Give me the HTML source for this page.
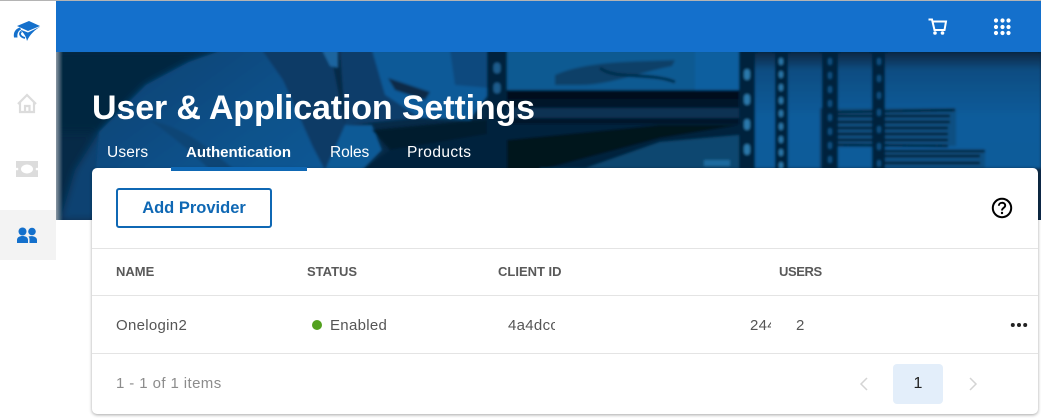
<!DOCTYPE html>
<html><head><meta charset="utf-8"><style>
*{box-sizing:border-box}
html,body{margin:0;padding:0;width:1041px;height:418px;overflow:hidden;background:#fff;font-family:"Liberation Sans",sans-serif}
.a{position:absolute;white-space:nowrap}
.th{font-size:13px;font-weight:bold;color:#595959;top:265px;line-height:14px}
.td{font-size:15px;color:#555;top:318px;line-height:16px;letter-spacing:.3px}
.tab{font-size:15.5px;color:#fff;top:144px;line-height:17px;letter-spacing:.15px}
</style></head><body>
<div class="a" style="left:0;top:0;width:1041px;height:1px;background:#b4b4b4"></div>
<div class="a" style="left:56px;top:1px;width:985px;height:51px;background:#1470cc"></div>
<svg class="a" style="left:0;top:0" width="1041" height="220" viewBox="0 0 1041 220">
<defs>
<filter id="b" x="-5%" y="-5%" width="110%" height="110%"><feGaussianBlur stdDeviation="1.2"/></filter>
<filter id="b2" x="-5%" y="-5%" width="110%" height="110%"><feGaussianBlur stdDeviation="4"/></filter>
<clipPath id="c"><rect x="56" y="52" width="985" height="168"/></clipPath>
<linearGradient id="w" x1="0" y1="0" x2="0" y2="1"><stop offset="0" stop-color="#06233c"/><stop offset=".12" stop-color="#0a4d82"/><stop offset=".4" stop-color="#0a5c9b"/><stop offset="1" stop-color="#0a5a98"/></linearGradient>
<linearGradient id="l" x1="0" y1="0" x2="1" y2="0"><stop offset="0" stop-color="#8a97a3"/><stop offset="1" stop-color="#8a97a3" stop-opacity="0"/></linearGradient>
<linearGradient id="s" x1="0" y1="0" x2="1" y2="1"><stop offset="0" stop-color="#0a3f6e"/><stop offset=".5" stop-color="#0c5088"/><stop offset="1" stop-color="#0d5a9a"/></linearGradient>
</defs>
<g clip-path="url(#c)">
<rect x="56" y="52" width="985" height="168" fill="#062a47"/>
<g filter="url(#b2)">
<rect x="56" y="52" width="180" height="80" fill="#06253f"/>
<path d="M60 220 L75 170 L99 132 L146 85 L189 62 L223 50 L300 50 L340 170 L340 220Z" fill="#0a4372"/>
</g>
<g filter="url(#b)">
<path d="M92 220 L99 132 L146 85 L189 62 L223 50 L262 50 L283 80 L313 147 L325 170 L92 170Z" fill="url(#s)"/>
<path d="M150 120 C190 130 210 150 235 170 L210 170 C190 150 170 135 150 120Z" fill="#0a4474"/>
<path d="M262 50 L330 50 L345 125 L325 170 L313 147 L283 80Z" fill="#0a3a66"/>
<path d="M322 50 L338 50 L338 68 L330 66Z" fill="#1a659f"/>
<path d="M370 50 L490 50 L490 92 L470 120 L420 118 L385 95Z" fill="#0c5a98"/>
<path d="M388 78 L430 92 L425 100 L395 90Z" fill="#072a47"/>
<path d="M450 50 L490 50 L490 88 L455 85Z" fill="#0a4a7e"/>
<path d="M325 170 L345 125 L372 125 L382 150 L362 170Z" fill="#0e5a96"/>
<path d="M340 50 L372 50 L385 95 L420 118 L345 125Z" fill="#0a3c6a"/>
<path d="M372 130 L500 118 L500 132 L390 150Z" fill="#051a2e"/>
<path d="M362 170 L390 150 L500 132 L500 170Z" fill="#06233c"/>
<rect x="505" y="50" width="190" height="40" fill="#0a5a92"/>
<path d="M555 75 C590 60 640 62 675 60 L672 66 C640 72 610 85 580 85 L555 85Z" fill="#083f68"/>
<path d="M600 68 C615 80 650 72 675 82" stroke="#062b4a" stroke-width="3" fill="none"/>
<rect x="695" y="50" width="46" height="42" fill="#0a5e9f"/>
<rect x="507" y="90" width="233" height="36" fill="#05192c"/>
<rect x="507" y="90" width="233" height="9" fill="#030f1c"/>
<rect x="507" y="108" width="233" height="10" fill="#0a3253"/>
<rect x="507" y="124" width="233" height="46" fill="#06233c"/>
<path d="M507 140 L660 125 L740 125 L660 138 L540 170 L507 170Z" fill="#04121f"/>
<path d="M580 170 L660 142 L740 135 L740 170Z" fill="#0a466f"/>
<rect x="704" y="160" width="26" height="6" fill="#1f6a9e"/>
<rect x="741" y="50" width="300" height="170" fill="url(#w)"/>
<rect x="540" y="168" width="501" height="52" fill="#0a3a60"/>
<rect x="1036" y="168" width="5" height="52" fill="#0b2b46"/>
<rect x="838" y="108" width="118" height="38" fill="#0a4f82"/>
<rect x="885" y="150" width="100" height="18" fill="#0a4f82"/>
<g stroke="#061a2c" stroke-width="2.4">
<line x1="838" y1="112" x2="955" y2="110"/><line x1="838" y1="116" x2="950" y2="116"/><line x1="838" y1="122" x2="950" y2="122"/><line x1="838" y1="128" x2="948" y2="128"/><line x1="838" y1="134" x2="948" y2="134"/><line x1="838" y1="140" x2="948" y2="140"/><line x1="838" y1="145" x2="948" y2="146"/>
<line x1="885" y1="151" x2="985" y2="151"/><line x1="885" y1="156" x2="980" y2="156"/><line x1="885" y1="163" x2="980" y2="163"/>
</g>
<rect x="820" y="108" width="18" height="60" fill="#0a3a60"/>
<g fill="#05233c">
<rect x="487" y="50" width="20" height="120"/>
<rect x="739" y="50" width="16" height="120"/>
<rect x="775" y="50" width="13" height="120"/>
<rect x="822" y="50" width="16" height="120"/>
<rect x="872" y="50" width="13" height="120"/>
</g>
<g stroke-linecap="round" fill="none" stroke="#0c4f82">
<line x1="497" y1="66" x2="497" y2="70" stroke-width="7" stroke="#1f5c8c"/>
<line x1="497" y1="86" x2="497" y2="90" stroke-width="7" stroke="#1f5c8c"/>
<line x1="747" y1="72" x2="747" y2="170" stroke-width="6" stroke-dasharray="5 20" stroke="#2a78ac"/>
<line x1="781" y1="60" x2="781" y2="170" stroke-width="4" stroke-dasharray="3 10" stroke="#2a78ac"/>
<line x1="830" y1="60" x2="830" y2="170" stroke-width="4" stroke-dasharray="3 11"/>
<line x1="879" y1="60" x2="879" y2="170" stroke-width="4" stroke-dasharray="3 14"/>
</g>
</g>
<rect x="56" y="52" width="7" height="168" fill="url(#l)"/>
</g>
<!-- logo -->
<g fill="#1470cc">
<path d="M17 26 L29 21 L40 26 L28 31Z"/>
<path d="M40.300 26.500 C35 30 30 34 27 41 C26.300 37 24 33 20 29.500 L28 32.500Z"/>
<path d="M14 37.500 C13 32 16 28.500 20 27.500 L21 29.500 C18 31 17 34 17.500 37.500Z"/>
</g>
<path d="M21.500 31.500 C19 33 19.500 36.500 25 38" stroke="#1470cc" stroke-width="1.800" fill="none"/>
<!-- home -->
<path d="M18 104 L27 95 L36 104 M20 102 V112 H34 V102 M25 112 V106 H29.500 V112" fill="none" stroke="#dcdcdc" stroke-width="2.200"/>
<!-- money -->
<path d="M16 161 H38 V177 H16Z" fill="#dcdcdc"/>
<ellipse cx="27" cy="169" rx="6" ry="4.500" fill="#fff"/>
<circle cx="17" cy="169" r="1.300" fill="#fff"/><circle cx="37" cy="169" r="1.300" fill="#fff"/>
</svg>
<div class="a" style="left:0;top:210px;width:56px;height:50px;background:#f3f3f3"></div>
<svg class="a" style="left:14px;top:222px" width="26" height="24" viewBox="14 222 26 24">
<g fill="#1470cc">
<circle cx="22.500" cy="231.500" r="4"/><circle cx="32" cy="231.500" r="3.800"/>
<path d="M17 243 V240 C17 237 20 236 22.500 236 C25 236 28 237 28 240 V243Z"/>
<path d="M29.500 243 V239.500 C29.500 238 29 237 28.500 236.500 C32 235.500 37 236.500 37 240 V243Z"/>
</g>
</svg>
<!-- header icons -->
<svg class="a" style="left:920px;top:10px" width="100" height="30" viewBox="920 10 100 30">
<path d="M928.500 19.500 H932 L934.500 30 H944.500 L946 21.500 H932.500" fill="none" stroke="#fff" stroke-width="2"/>
<circle cx="935" cy="33" r="1.800" fill="#fff"/><circle cx="942.500" cy="33" r="1.800" fill="#fff"/>
<g fill="#fff">
<circle cx="996" cy="20.500" r="2.100"/><circle cx="1002.500" cy="20.500" r="2.100"/><circle cx="1008.500" cy="20.500" r="2.100"/>
<circle cx="996" cy="27" r="2.100"/><circle cx="1002.500" cy="27" r="2.100"/><circle cx="1008.500" cy="27" r="2.100"/>
<circle cx="996" cy="33" r="2.100"/><circle cx="1002.500" cy="33" r="2.100"/><circle cx="1008.500" cy="33" r="2.100"/>
</g>
</svg>
<div class="a" style="left:92px;top:87px;font-size:34px;font-weight:bold;color:#fff;line-height:42px;letter-spacing:-.13px">User &amp; Application Settings</div>
<div class="a tab" style="left:107px">Users</div>
<div class="a tab" style="left:186px;font-weight:bold;font-size:15px;letter-spacing:0">Authentication</div>
<div class="a tab" style="left:330px;letter-spacing:-.1px">Roles</div>
<div class="a tab" style="left:407px;letter-spacing:.4px">Products</div>
<!-- card -->
<div class="a" style="left:92px;top:168px;width:946px;height:246px;background:#fff;border-radius:5px;box-shadow:0 1px 3px rgba(0,0,0,.35)"></div>
<div class="a" style="left:171px;top:167px;width:136px;height:4px;background:#0f68b4"></div>
<div class="a" style="left:116px;top:188px;width:156px;height:40px;border:2px solid #0f68b4;border-radius:3px;color:#0f68b4;font-size:16.5px;font-weight:bold;line-height:37px;text-align:center">Add Provider</div>
<svg class="a" style="left:990px;top:196px" width="24" height="24" viewBox="0 0 24 24">
<circle cx="12" cy="12" r="9.200" fill="none" stroke="#000" stroke-width="2"/>
<path d="M8.800 9.800 C8.800 5.800 15.200 5.800 15.200 9.500 C15.200 12 12 11.800 12 14.500" fill="none" stroke="#000" stroke-width="1.900"/>
<circle cx="12" cy="17" r="1.200"/>
</svg>
<div class="a" style="left:92px;top:248px;width:946px;height:1px;background:#e4e4e4"></div>
<div class="a" style="left:92px;top:295px;width:946px;height:1px;background:#e4e4e4"></div>
<div class="a" style="left:92px;top:353px;width:946px;height:1px;background:#e4e4e4"></div>
<div class="a th" style="left:116px">NAME</div>
<div class="a th" style="left:307px">STATUS</div>
<div class="a th" style="left:498px">CLIENT ID</div>
<div class="a th" style="left:779px;letter-spacing:-.4px">USERS</div>
<div class="a td" style="left:116px">Onelogin2</div>
<div class="a" style="left:312px;top:320px;width:10px;height:10px;border-radius:50%;background:#52a01e"></div>
<div class="a td" style="left:330px">Enabled</div>
<div class="a td" style="left:508px;width:47px;overflow:hidden">4a4dcc</div>
<div class="a td" style="left:750px;width:21px;overflow:hidden">2444</div>
<div class="a td" style="left:796px">2</div>
<svg class="a" style="left:1008px;top:320px" width="22" height="10"><g fill="#222"><circle cx="4.800" cy="5" r="2"/><circle cx="11" cy="5" r="2"/><circle cx="17.200" cy="5" r="2"/></g></svg>
<div class="a" style="left:116px;top:376px;font-size:15px;line-height:16px;color:#8c8c8c;letter-spacing:.4px">1 - 1 of 1 items</div>
<svg class="a" style="left:855px;top:374px" width="130" height="20"><path d="M12 4 L6 10 L12 16 M115 4 L121 10 L115 16" fill="none" stroke="#d4d4d4" stroke-width="1.500"/></svg>
<div class="a" style="left:893px;top:364px;width:50px;height:40px;border-radius:4px;background:#e3eefa;color:#222;font-size:16px;line-height:40px;text-align:center">1</div>
</body></html>
